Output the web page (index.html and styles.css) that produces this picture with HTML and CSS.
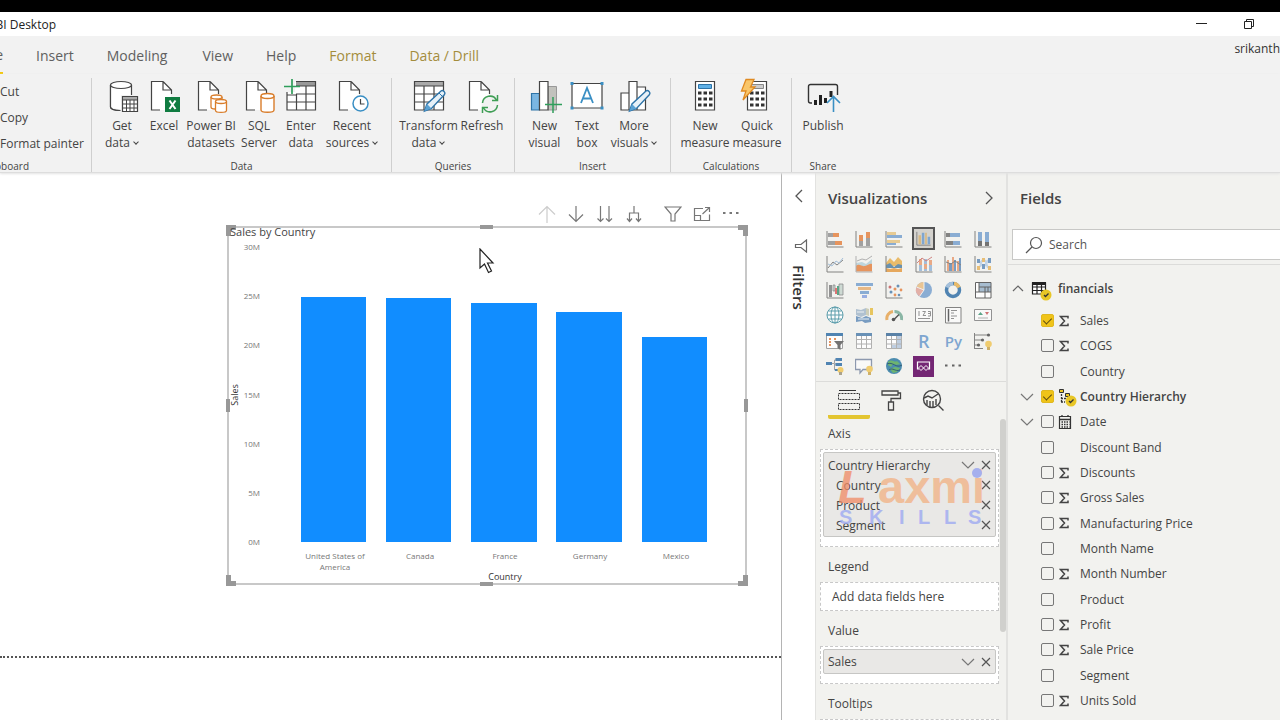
FILE: index.html
```html
<!DOCTYPE html>
<html lang="en">
<head>
<meta charset="utf-8">
<title>BI Desktop</title>
<link rel="stylesheet" href="styles.css">
</head>
<body>
<svg class="defs" aria-hidden="true">
  <defs>
    <symbol id="doc" viewBox="0 0 36 36"><path d="M5 3.500h12l8 8v20.500H5z" fill="#fff"/><path d="M17 3.500H5.500v28.500H14M17 3.500l8.500 8.500v4M17 3.500V12h8.500" fill="none" stroke="#444" stroke-width="1.200"/></symbol>
    <symbol id="x" viewBox="0 0 10 10"><path d="M1 1l8 8M9 1L1 9" stroke="#555" stroke-width="1.200"/></symbol>
    <symbol id="down" viewBox="0 0 14 8"><path d="M1 1l6 6 6-6" fill="none" stroke="#777" stroke-width="1.200"/></symbol>
    <symbol id="sigma" viewBox="0 0 10 12"><path d="M9 3.500V1.500H1.500L5.500 6l-4 4.500H9V8.500" fill="none" stroke="#444" stroke-width="1.500"/></symbol>
    <symbol id="axes" viewBox="0 0 18 18"><path d="M1 1v16h16.500" fill="none" stroke="#777"/></symbol>
  </defs>
</svg>

<div class="letterbox"></div>
<header class="titlebar">
  <span class="app-title">BI Desktop</span>
  <span class="window-buttons">
    <button aria-label="Minimize"><svg width="12" height="12" viewBox="0 0 12 12"><path d="M1 5.500h11" stroke="#222"/></svg></button>
    <button aria-label="Restore"><svg width="12" height="12" viewBox="0 0 12 12"><path d="M1.500 3.500h7v7h-7zM3.500 3.500v-2h7v7h-2" fill="none" stroke="#222"/></svg></button>
  </span>
</header>

<div class="tabbar">
  <nav class="tabs">
    <button class="tab active">e</button>
    <button class="tab">Insert</button>
    <button class="tab">Modeling</button>
    <button class="tab">View</button>
    <button class="tab">Help</button>
    <button class="tab context">Format</button>
    <button class="tab context">Data / Drill</button>
  </nav>
  <span class="user">srikanth</span>
</div>

<div class="ribbon">
  <section class="group clipboard">
    <div class="clip-list">
      <button>Cut</button>
      <button>Copy</button>
      <button>Format painter</button>
    </div>
    <span class="caption">pboard</span>
  </section>

  <section class="group data">
    <div class="tools">
      <button class="tool"><svg width="36" height="36" viewBox="0 0 36 36"><path d="M6.500 7v22c0 2 4 3.500 9 3.500" fill="none" stroke="#444" stroke-width="1.200"/><path d="M7 7h21v10H17v14c-6 0-10-1-10-3z" fill="#fff"/><path d="M6.500 7v22c0 2 4 3.500 10 3.500M27.500 7v10" fill="none" stroke="#444" stroke-width="1.200"/><ellipse cx="17" cy="7" rx="10.500" ry="3.500" fill="#fff" stroke="#444" stroke-width="1.200"/><path d="M18.500 18.500h15v15h-15z" fill="#fff" stroke="#444" stroke-width="1.200"/><path d="M19 19h14v3H19z" fill="#aaa"/><path d="M18.500 22h15M18.500 26h15M18.500 30h15M22.500 22v11.500M26 22v11.500M30 22v11.500" stroke="#444"/></svg><span>Get<br>data<i class="caret"></i></span></button>
      <button class="tool"><svg width="36" height="36" viewBox="0 0 36 36"><use href="#doc"/><rect x="19" y="19" width="15" height="15" fill="#107c41"/><path d="M23.500 22.500l6 8.500M29.500 22.500l-6 8.500" stroke="#fff" stroke-width="2"/></svg><span>Excel</span></button>
      <button class="tool"><svg width="36" height="36" viewBox="0 0 36 36"><use href="#doc"/><path d="M18 19v10c0 2 5 2 7 2V19z" fill="#fff"/><path d="M18 19v10c0 1.500 2 2 4 2M29 19v2" fill="none" stroke="#d97d2b" stroke-width="1.300"/><ellipse cx="23.500" cy="19" rx="5.500" ry="2" fill="#fff" stroke="#d97d2b" stroke-width="1.300"/><path d="M22.500 23.500v9c0 2.500 11 2.500 11 0v-9" fill="#fff" stroke="#d97d2b" stroke-width="1.300"/><ellipse cx="28" cy="23.500" rx="5.500" ry="2" fill="#fff" stroke="#d97d2b" stroke-width="1.300"/></svg><span>Power BI<br>datasets</span></button>
      <button class="tool"><svg width="36" height="36" viewBox="0 0 36 36"><use href="#doc"/><path d="M20 18v14c0 3 13 3 13 0V18" fill="#fff" stroke="#d97d2b" stroke-width="1.400"/><ellipse cx="26.500" cy="18" rx="6.500" ry="2.500" fill="#fff" stroke="#d97d2b" stroke-width="1.400"/></svg><span>SQL<br>Server</span></button>
      <button class="tool"><svg width="36" height="36" viewBox="0 0 36 36"><path d="M4 4h28v28H4z" fill="#fff"/><path d="M13 4h19v4H13z" fill="#999"/><path d="M13 3.500h19.500v28.500H4V14M13 8h19.500M13 16h19.500M4 24h28.500M13.500 16v16M23 8v24M4 17h10" fill="none" stroke="#444" stroke-width="1.200"/><path d="M0 0h12v14H0z" fill="#f2f2f2"/><path d="M9 1v15M1 8.500h16" stroke="#2f9e5b" stroke-width="1.700"/></svg><span>Enter<br>data</span></button>
      <button class="tool"><svg width="36" height="36" viewBox="0 0 36 36"><use href="#doc"/><circle cx="26.500" cy="25.500" r="7.500" fill="#fff" stroke="#3a8fc4" stroke-width="1.500"/><path d="M26.500 21v5h4" fill="none" stroke="#444" stroke-width="1.200"/></svg><span>Recent<br>sources<i class="caret"></i></span></button>
    </div>
    <span class="caption">Data</span>
  </section>

  <section class="group queries">
    <div class="tools">
      <button class="tool"><svg width="36" height="36" viewBox="0 0 36 36"><path d="M3.500 3.500h29v28.500h-29z" fill="#fff"/><path d="M4 4h28v4H4z" fill="#aaa"/><path d="M3.500 3.500h29v28.500h-29zM3.500 8h29M3.500 16h29M3.500 24h29M13 8v24M23 8v24" fill="none" stroke="#444" stroke-width="1.200"/><path d="M13.500 33l2.500-7 14-13c2-1.500 5 1.500 3.500 3.500l-13 14z" fill="#e7f1f8" stroke="#2e74a8" stroke-width="1.400"/><path d="M13.500 33l2.500-7 4.500 4.500z" fill="#5aa2d4"/><path d="M28 15l4 4" stroke="#2e74a8"/></svg><span>Transform<br>data<i class="caret"></i></span></button>
      <button class="tool"><svg width="36" height="36" viewBox="0 0 36 36"><use href="#doc"/><circle cx="26" cy="26" r="8.500" fill="#f2f2f2"/><path d="M18.500 25a7.500 7.500 0 0 1 14-3M33.500 27a7.500 7.500 0 0 1-14 3M33.500 17v5.500H28M18.500 35v-5.500H24" fill="none" stroke="#3f9e55" stroke-width="1.500"/></svg><span>Refresh</span></button>
    </div>
    <span class="caption">Queries</span>
  </section>

  <section class="group insert">
    <div class="tools">
      <button class="tool"><svg width="36" height="36" viewBox="0 0 36 36"><path d="M4.500 15.500h8V32h-8z" fill="#7ab6e2" stroke="#2e74a8" stroke-width="1.200"/><path d="M21 8.500h8.500V32H21z" fill="#c2c2bd" stroke="#999"/><path d="M12.500 3.500h8.500V32h-8.500z" fill="#fff" stroke="#444" stroke-width="1.200"/><path d="M26 19v16M18 26.500H35" stroke="#2f9e5b" stroke-width="1.500"/></svg><span>New<br>visual</span></button>
      <button class="tool"><svg width="36" height="36" viewBox="0 0 36 36"><path d="M3 5.500h30V30H3z" fill="#fff" stroke="#444" stroke-width="1.200"/><path d="M1.500 4h3v3h-3zM31.500 4h3v3h-3zM1.500 28.500h3v3h-3zM31.500 28.500h3v3h-3z" fill="#3a8fc4"/><path d="M12 25l6-15 6 15M14 20.500h8" fill="none" stroke="#3a8fc4" stroke-width="1.800"/></svg><span>Text<br>box</span></button>
      <button class="tool"><svg width="36" height="36" viewBox="0 0 36 36"><path d="M5 15h8v17H5zM21 9h8.500v23H21zM13 3.500h8V32h-8z" fill="#fff" stroke="#444" stroke-width="1.200"/><path d="M13.500 33l2.500-7 14-13c2-1.500 5 1.500 3.500 3.500l-13 14z" fill="#e7f1f8" stroke="#2e74a8" stroke-width="1.400"/><path d="M13.500 33l2.500-7 4.500 4.500z" fill="#5aa2d4"/></svg><span>More<br>visuals<i class="caret"></i></span></button>
    </div>
    <span class="caption">Insert</span>
  </section>

  <section class="group calc">
    <div class="tools">
      <button class="tool"><svg width="36" height="36" viewBox="0 0 36 36"><path d="M8.500 3.500h19V32h-19z" fill="#fff" stroke="#444" stroke-width="1.200"/><path d="M11.500 6.500h13v4h-13z" fill="#5fb0e6" stroke="#2e74a8"/><path d="M11 15h3.500M16.500 15H20M22 15h3.500M11 21h3.500M16.500 21H20M22 21h3.500M11 27h3.500M16.500 27H20M22 27h3.500" stroke="#333" stroke-width="3.200"/></svg><span>New<br>measure</span></button>
      <button class="tool"><svg width="36" height="36" viewBox="0 0 36 36"><path d="M8.500 3.500h19V32h-19z" fill="#fff" stroke="#444" stroke-width="1.200"/><path d="M12.500 6.500h12v4h-12z" fill="#ccc" stroke="#888"/><path d="M11 15h3.500M16.500 15H20M22 15h3.500M11 21h3.500M16.500 21H20M22 21h3.500M11 27h3.500M16.500 27H20M22 27h3.500" stroke="#333" stroke-width="3.200"/><path d="M7 1.500h8L11.500 9h4.500L4 22l3-9H2.500z" fill="#f9c66a" stroke="#e08a22" stroke-width="1.300"/></svg><span>Quick<br>measure</span></button>
    </div>
    <span class="caption">Calculations</span>
  </section>

  <section class="group share">
    <div class="tools">
      <button class="tool"><svg width="36" height="36" viewBox="0 0 36 36"><path d="M7 25H5.500a2 2 0 0 1-2-2V8.500a2 2 0 0 1 2-2h25a2 2 0 0 1 2 2V17" fill="none" stroke="#333" stroke-width="1.400"/><path d="M10.500 22v5M15.500 17v10M20.500 20v5M26 13v6" stroke="#222" stroke-width="3"/><path d="M28.500 34V19M22 25l6.500-6.500L35 25" fill="none" stroke="#3a8fc4" stroke-width="1.600"/></svg><span>Publish</span></button>
    </div>
    <span class="caption">Share</span>
  </section>
</div>

<main class="workspace">
  <section class="canvas">
    <div class="page">
      <div class="visual">
        <div class="visual-header">
          <button aria-label="Drill up"><svg width="18" height="18" viewBox="0 0 18 18"><path d="M9 18V1.500M1 9.500l8-8 8 8" fill="none" stroke="#ccc" stroke-width="1.200"/></svg></button>
          <button aria-label="Drill down"><svg width="18" height="18" viewBox="0 0 18 18"><path d="M9 1v15.500M2 9.500l7 7 7-7" fill="none" stroke="#777" stroke-width="1.200"/></svg></button>
          <button aria-label="Next level"><svg width="18" height="18" viewBox="0 0 18 18"><path d="M4.500 1v15.500M1.500 13.500l3 3 3-3M13 1v15.500M10 13.500l3 3 3-3" fill="none" stroke="#777" stroke-width="1.200"/></svg></button>
          <button aria-label="Expand all"><svg width="18" height="18" viewBox="0 0 18 18"><path d="M9 1v7M4.500 16.500V8h9v8.500M2 13.500l2.500 3 2.500-3M11 13.500l2.500 3 2.500-3" fill="none" stroke="#777" stroke-width="1.200"/></svg></button>
          <button class="spaced" aria-label="Filters on visual"><svg width="18" height="18" viewBox="0 0 18 18"><path d="M1 2h16l-6 7v7H7V9z" fill="none" stroke="#777" stroke-width="1.200"/></svg></button>
          <button aria-label="Focus mode"><svg width="18" height="18" viewBox="0 0 18 18"><path d="M10 3.500H1.500v12h15v-6M1.500 10.500h6v5M9.500 9l7-6.500M12 2.500h4.500V7" fill="none" stroke="#777" stroke-width="1.200"/></svg></button>
          <button aria-label="More options"><svg width="18" height="18" viewBox="0 0 18 18"><path d="M1 8h2.500M7.500 8H10M14 8h2.500" stroke="#777" stroke-width="2"/></svg></button>
        </div>
        <svg class="chart" viewBox="0 0 521 360" role="img" aria-label="Sales by Country">
          <rect x="1" y="1" width="518" height="357" fill="none" stroke="#a4a4a4" stroke-width="1.200"/>
          <g fill="#989898">
            <path d="M-1-1h10v5H4v6h-5zM521-1h-10v5h5v6h5zM-1 360h10v-5H4v-6h-5zM521 360h-10v-5h5v-6h5z"/>
            <path d="M253-1h13v4h-13zM253 356h13v4h-13zM-1 173h4v13h-4zM517 173h4v13h-4z"/>
          </g>
          <text class="chart-title" x="3" y="10">Sales by Country</text>
          <g class="tick" text-anchor="end">
            <text x="33" y="24">30M</text><text x="33" y="73">25M</text><text x="33" y="122">20M</text><text x="33" y="172">15M</text><text x="33" y="221">10M</text><text x="33" y="270">5M</text><text x="33" y="319">0M</text>
          </g>
          <g fill="#118dff">
            <rect x="74" y="71" width="65" height="245"/><rect x="159" y="72" width="65" height="244"/><rect x="244" y="77" width="66" height="239"/><rect x="329" y="86" width="66" height="230"/><rect x="415" y="111" width="65" height="205"/>
          </g>
          <g class="tick" text-anchor="middle">
            <text x="108" y="333">United States of</text><text x="108" y="344">America</text><text x="193" y="333">Canada</text><text x="278" y="333">France</text><text x="363" y="333">Germany</text><text x="449" y="333">Mexico</text>
          </g>
          <text class="axis-title" x="278" y="354" text-anchor="middle">Country</text>
          <text class="axis-title" x="11" y="169" text-anchor="middle" transform="rotate(-90 11 169)">Sales</text>
        </svg>
        <svg class="cursor" width="16" height="26" viewBox="0 0 16 26"><path d="M1 1v19l4.500-4 4 8.500 3-1.500-4-8H14z" fill="#fff" stroke="#222" stroke-width="1.200"/></svg>
      </div>
    </div>
  </section>

  <aside class="filters">
    <button aria-label="Expand filters"><svg width="9" height="14" viewBox="0 0 9 14"><path d="M8 1L2 7l6 6" fill="none" stroke="#555" stroke-width="1.300"/></svg></button>
    <svg class="funnel" width="14" height="14" viewBox="0 0 14 14"><path d="M12.500 1v12L7 8.500H1.500v-3H7z" fill="none" stroke="#666" stroke-width="1.200"/></svg>
    <span class="filters-label">Filters</span>
  </aside>

  <aside class="viz">
    <header class="pane-head"><h2>Visualizations</h2><button aria-label="Collapse"><svg width="9" height="14" viewBox="0 0 9 14"><path d="M1 1l6 6-6 6" fill="none" stroke="#555" stroke-width="1.300"/></svg></button></header>
    <div class="gallery">
      <button aria-label="Stacked bar"><svg viewBox="0 0 18 18"><use href="#axes"/><path d="M2 3h5v4H2zM2 11h7v4H2z" fill="#999"/><path d="M7 3h6v4H7zM9 11h7v4H9z" fill="#e58a4e"/></svg></button>
      <button aria-label="Stacked column"><svg viewBox="0 0 18 18"><use href="#axes"/><path d="M4 11h4v5H4zM11 8h4v8h-4z" fill="#999"/><path d="M4 5h4v6H4zM11 2h4v6h-4z" fill="#e58a4e"/></svg></button>
      <button aria-label="Clustered bar"><svg viewBox="0 0 18 18"><use href="#axes"/><path d="M2 2h9v3H2zM2 10h13v3H2z" fill="#e6c78a"/><path d="M2 5h15v3H2zM2 13h9v2H2z" fill="#7fa6d0"/></svg></button>
      <button class="selected" aria-label="Clustered column"><svg viewBox="0 0 18 18"><use href="#axes"/><path d="M3 5h3v11H3zM11 2h2v14h-2z" fill="#d9b982"/><path d="M7 2h3v14H7zM14 7h3v9h-3z" fill="#7fa6d0"/></svg></button>
      <button aria-label="100% stacked bar"><svg viewBox="0 0 18 18"><use href="#axes"/><path d="M2 3h4v4H2zM2 11h7v4H2z" fill="#777"/><path d="M6 3h10v4H6zM9 11h7v4H9z" fill="#7fa6d0"/></svg></button>
      <button aria-label="100% stacked column"><svg viewBox="0 0 18 18"><use href="#axes"/><path d="M4 11h4v5H4zM11 12h4v4h-4z" fill="#666"/><path d="M4 2h4v9H4zM11 2h4v10h-4z" fill="#7fa6d0"/></svg></button>

      <button aria-label="Line"><svg viewBox="0 0 18 18"><use href="#axes"/><path d="M2 13l5-6 4 3 6-5" fill="none" stroke="#777"/><path d="M2 9l4 2 4-5 3 2 4-5" fill="none" stroke="#9dbbd8"/></svg></button>
      <button aria-label="Area"><svg viewBox="0 0 18 18"><path d="M1 8l6-1 4 2 6-5v9H1z" fill="#b9d3dc"/><path d="M1 11c4-3 5 1 9 0s5-3 7-2v7.500H1z" fill="#e58a4e"/><path d="M1 1v16h16.500M2 6l5-2 4 1 6-4" fill="none" stroke="#aaa"/></svg></button>
      <button aria-label="Stacked area"><svg viewBox="0 0 18 18"><path d="M1 8l4-5 4 4 4-5 4 4v5H1z" fill="#e9b65c"/><path d="M1 10l4-2 4 4 4-3 4 1v3H1z" fill="#5b87a8"/><path d="M1 13l4 1 4-1 4 1 4-1v4H1z" fill="#e5a04e"/><path d="M1 1v16" stroke="#777"/></svg></button>
      <button aria-label="Line and stacked column"><svg viewBox="0 0 18 18"><use href="#axes"/><path d="M4 9h3v7H4zM9 4h3v12H9zM14 8h3v8h-3z" fill="#9bb9d8"/><path d="M4 4h3v6H4zM9 9h3v5H9zM14 5h3v5h-3z" fill="#e9a27a"/><path d="M2 8l5-5 4 3 6-4" fill="none" stroke="#c77"/></svg></button>
      <button aria-label="Line and clustered column"><svg viewBox="0 0 18 18"><use href="#axes"/><path d="M3 5h2v11H3zM8 2h2v14H8zM13 6h2v10h-2z" fill="#e9a27a"/><path d="M5 8h3v8H5zM10 5h2v11h-2zM15 3h2v13h-2z" fill="#6b93bd"/><path d="M2 7l5 2 4-3 6 4" fill="none" stroke="#777"/></svg></button>
      <button aria-label="Ribbon"><svg viewBox="0 0 18 18"><use href="#axes"/><path d="M6 6l2 5M11 11l3-6M6 12l2-7M11 5l3 8" stroke="#bcd0e4" stroke-width="2"/><path d="M3 4h3v4H3zM8 9h3v5H8zM14 3h3v5h-3z" fill="#6b93bd"/><path d="M3 11h3v4H3zM8 3h3v4H8zM14 11h3v4h-3z" fill="#e6b96a"/></svg></button>

      <button aria-label="Waterfall"><svg viewBox="0 0 18 18"><use href="#axes"/><path d="M3 4h3v12H3z" fill="#888"/><path d="M7 4h2v6H7zM13 3h4v11h-4z" fill="#cbd8d1" stroke="#777" stroke-width=".7"/><path d="M9 7h2v6H9z" fill="#d66"/><path d="M11 5h2v9h-2z" fill="#4c9c7c"/></svg></button>
      <button aria-label="Funnel"><svg viewBox="0 0 18 18"><path d="M1 2h17v3H1zM5 10h9v3H5z" fill="#7fa6d0"/><path d="M3 6h13v3H3z" fill="#e6b27a"/><path d="M7 14h5v3H7z" fill="#8fa7e0"/></svg></button>
      <button aria-label="Scatter"><svg viewBox="0 0 18 18"><use href="#axes"/><g fill="#5b87b0"><circle cx="6" cy="11" r="1.500"/><circle cx="13" cy="5" r="1.500"/><circle cx="14" cy="14" r="1.300"/></g><g fill="#e58a4e"><circle cx="10" cy="8" r="1.500"/><circle cx="10" cy="14" r="1.400"/><circle cx="16" cy="9" r="1.400"/></g><circle cx="5" cy="6" r="1.500" fill="#c66"/></svg></button>
      <button aria-label="Pie"><svg viewBox="0 0 18 18"><circle cx="9" cy="9" r="8" fill="#7fa6d0"/><path d="M9 9V1a8 8 0 0 0-7.500 5z" fill="#e9c18b"/><path d="M9 9L1.500 6a8 8 0 0 0 3 9.500z" fill="#e2a9a0"/><path d="M9 1v8l-4.500 6.500M9 9L1.500 6" fill="none" stroke="#f2f2ef"/></svg></button>
      <button aria-label="Donut"><svg viewBox="0 0 18 18"><circle cx="9" cy="9" r="6.500" fill="none" stroke="#3f79ac" stroke-width="3.500"/><path d="M3 6.500A6.500 6.500 0 0 1 9 2.500" fill="none" stroke="#9dbbd8" stroke-width="3.500"/><path d="M10 2.500a6.500 6.500 0 0 1 5 4" fill="none" stroke="#e9b65c" stroke-width="3.500"/></svg></button>
      <button aria-label="Treemap"><svg viewBox="0 0 18 18"><path d="M1.500 1.500h15.500v15.500H1.500z" fill="#fff"/><path d="M5 2h12v9H5z" fill="#9fb8cd"/><path d="M1.500 1.500h15.500v15.500H1.500zM1.500 11h15.500M5 1.500V11M11 6v11M5 6h12M14 6v5" fill="none" stroke="#555"/></svg></button>

      <button aria-label="Map"><svg viewBox="0 0 18 18"><g fill="none" stroke="#4c95a5"><circle cx="9" cy="9" r="8" fill="#fff"/><ellipse cx="9" cy="9" rx="4" ry="8"/><path d="M9 1v16M1 9h16M2.500 5h13M2.500 13h13"/></g></svg></button>
      <button aria-label="Filled map"><svg viewBox="0 0 18 18"><path d="M1 3l5 1 5-2v7l-5 2-5-2z" fill="#a9bccd"/><path d="M11 2l3 1v7l-3-1z" fill="#c9cbb3"/><path d="M1 10l6 2 4-2 5 2v4l-6 1-3-2-6 1z" fill="#6b93bd"/><path d="M15 2h3v7h-3z" fill="#e6c14f"/><path d="M2 6h7M3 13h11" stroke="#eef2f4"/></svg></button>
      <button aria-label="Gauge"><svg viewBox="0 0 18 18"><path d="M2 14a7 7 0 0 1 6-8.500" fill="none" stroke="#e8a95b" stroke-width="3"/><path d="M9.500 5.500A7 7 0 0 1 16.500 14" fill="none" stroke="#7fb09d" stroke-width="3"/><path d="M9 13.500l5-5" stroke="#444" stroke-width="1.500"/><circle cx="8.500" cy="13.500" r="1.800" fill="#444"/></svg></button>
      <button aria-label="Card"><svg viewBox="0 0 18 18"><path d="M.5 2.500h17v13H.5z" fill="#fafafa" stroke="#888"/><path d="M4 5v5M7.500 5.500h3L8 9.500h3M13 5.500h2.500V10H13M13 7.500h2M3 12.500h12" fill="none" stroke="#888"/></svg></button>
      <button aria-label="Multi-row card"><svg viewBox="0 0 18 18"><path d="M1.500 1.500h15.500v15.500H1.500z" fill="#fafafa" stroke="#777"/><path d="M4.500 3v12.500" stroke="#555" stroke-width="1.500"/><path d="M7 4.500h6M7 7h3M7 10h6M7 12.500h3" stroke="#888"/></svg></button>
      <button aria-label="KPI"><svg viewBox="0 0 18 18"><path d="M.5 3.500h17v11H.5z" fill="#fafafa" stroke="#888"/><path d="M4 9l2.500-3L9 9z" fill="#4c9c7c"/><path d="M11 6h4l-2 3z" fill="#c66"/><path d="M4 12h10" stroke="#aaa"/></svg></button>

      <button aria-label="Slicer"><svg viewBox="0 0 18 18"><path d="M.5 1.500h16v15h-16z" fill="#fff" stroke="#999"/><path d="M0 1h17v3H0z" fill="#3f79ac"/><path d="M3 7h2M3 10h2M3 13h2M8 7h2" stroke="#e58a4e" stroke-width="2"/><path d="M8 9h10l-3.500 4v5l-3-2v-3z" fill="#666"/></svg></button>
      <button aria-label="Table"><svg viewBox="0 0 18 18"><path d="M1.500 2.500h15v14h-15zM1.500 7.500h15M1.500 12h15M6.500 2v15M11.500 2v15" fill="#fff" stroke="#aaa"/><path d="M1 1h16v3H1z" fill="#5b87b0"/></svg></button>
      <button aria-label="Matrix"><svg viewBox="0 0 18 18"><path d="M1.500 2.500h15v14h-15z" fill="#fff"/><path d="M12 4h5v13H7v-4h5z" fill="#b9cbe0"/><path d="M1.500 2.500h15v14h-15zM1.500 7.500h15M1.500 12h15M6.500 2v15M11.500 2v15" fill="none" stroke="#aaa"/><path d="M1 1h16v3H1z" fill="#4a76a0"/></svg></button>
      <button class="script" aria-label="R script visual">R</button>
      <button class="script py" aria-label="Python visual">Py</button>
      <button aria-label="Key influencers"><svg viewBox="0 0 18 18"><path d="M.5 1v16M1 3h13M1 8h7M1 13h4M0 16.500h9" stroke="#777"/><g fill="#555"><circle cx="14.500" cy="3" r="1.600"/><circle cx="8.500" cy="8" r="1.600"/><circle cx="4.500" cy="13" r="1.600"/></g><circle cx="14.500" cy="12" r="3.300" fill="#f0c862"/><path d="M13 15h3v3h-3z" fill="#cba95a"/></svg></button>

      <button aria-label="Decomposition tree"><svg viewBox="0 0 18 18"><path d="M6 6.500h2.500V3H10M8.500 7H10M8.500 7v6H11" fill="none" stroke="#999"/><path d="M0 5h6v3H0zM9.500 1H16v3H9.500zM9.500 6H16v3H9.500zM9 12h3v2H9z" fill="#3f79ac"/><circle cx="14.500" cy="13" r="3" fill="#f0c862"/><path d="M13 15h3v3h-3z" fill="#a39a82"/></svg></button>
      <button aria-label="Q and A"><svg viewBox="0 0 18 18"><path d="M.5 2.500h16v10H8l-3 3.500v-3.500H.5z" fill="#fafafa" stroke="#8390a8" stroke-width="1.300"/><circle cx="14.500" cy="12" r="3.300" fill="#f0c862"/><path d="M13 15h3v3h-3z" fill="#cba95a"/></svg></button>
      <button aria-label="ArcGIS map"><svg viewBox="0 0 18 18"><circle cx="9" cy="9" r="8" fill="#3b82a8"/><path d="M3 5c4-4 6 1 9-1l3 3-4 1-3-1-2 3-3-2zM5 12l5-2 5 1-3 4-4 1z" fill="#5fae62"/><path d="M2 7c6-3 9 5 15 1M4 13c4-3 6 2 11 0" fill="none" stroke="#1c4d6b"/></svg></button>
      <button aria-label="Power Apps"><svg class="tile" viewBox="0 0 21 21"><path d="M0 0h21v21H0z" fill="#742774"/><path d="M6 13H4.500V6h12v7H15" fill="none" stroke="#fff" stroke-width="1.200"/><path d="M8 9.500l2.500 2.500L8 14.500 5.500 12zM13 9.500l2.500 2.500-2.500 2.500-2.500-2.500z" fill="#742774" stroke="#fff"/></svg></button>
      <button aria-label="More visuals"><svg viewBox="0 0 18 18"><path d="M1 8.500h2.500M8 8.500h2.500M14.500 8.500H17" stroke="#555" stroke-width="2"/></svg></button>
    </div>

    <div class="viz-tabs">
      <button class="active" aria-label="Fields"><svg width="24" height="24" viewBox="0 0 24 24"><path d="M2 1.500h17" stroke="#333"/><path d="M1.500 4.500h21v6h-21zM1.500 14.500h21v6h-21z" fill="none" stroke="#333" stroke-dasharray="2 1"/></svg></button>
      <button aria-label="Format"><svg width="24" height="24" viewBox="0 0 24 24"><path d="M3 2h16v4H3zM19 4h2.500v5.500H12V13M9.500 13h5v8h-5z" fill="none" stroke="#444" stroke-width="1.300"/></svg></button>
      <button aria-label="Analytics"><svg width="24" height="24" viewBox="0 0 24 24"><circle cx="11" cy="10" r="8.500" fill="none" stroke="#444" stroke-width="1.400"/><path d="M17.500 16.500l5 5M3 9l4-2 4 2 6-4M6 11v5M9 12v6M12 12v6M15 10v6" fill="none" stroke="#444" stroke-width="1.400"/></svg></button>
    </div>

    <div class="wells">
      <div class="scrollthumb"></div>
      <section class="well"><h3>Axis</h3>
        <div class="drop">
          <div class="pill">
            <div class="item">Country Hierarchy<svg class="expand" width="14" height="8"><use href="#down"/></svg><button aria-label="Remove Country Hierarchy"><svg width="10" height="10"><use href="#x"/></svg></button></div>
            <div class="item child">Country<button aria-label="Remove Country"><svg width="10" height="10"><use href="#x"/></svg></button></div>
            <div class="item child">Product<button aria-label="Remove Product"><svg width="10" height="10"><use href="#x"/></svg></button></div>
            <div class="item child">Segment<button aria-label="Remove Segment"><svg width="10" height="10"><use href="#x"/></svg></button></div>
          </div>
          <svg class="watermark" width="150" height="62" viewBox="0 0 150 62">
            <text class="brand" y="36"><tspan class="brand-l" x="0">L</tspan><tspan x="40">axmi</tspan></text>
            <circle cx="139" cy="6" r="5" fill="#8f9cf0"/>
            <text class="brand-sub" x="1 31 61 80 106 130" y="57">SKILLS</text>
          </svg>
        </div>
      </section>
      <section class="well"><h3>Legend</h3><div class="drop empty">Add data fields here</div></section>
      <section class="well"><h3>Value</h3>
        <div class="drop"><div class="pill single"><div class="item">Sales<svg class="expand" width="14" height="8"><use href="#down"/></svg><button aria-label="Remove Sales"><svg width="10" height="10"><use href="#x"/></svg></button></div></div></div>
      </section>
      <section class="well"><h3>Tooltips</h3><div class="drop empty"></div></section>
    </div>
  </aside>

  <aside class="fields">
    <header class="pane-head"><h2>Fields</h2></header>
    <label class="search"><svg width="18" height="18" viewBox="0 0 18 18"><circle cx="11" cy="7" r="5.500" fill="none" stroke="#555" stroke-width="1.200"/><path d="M7 11l-6 6" stroke="#555" stroke-width="1.200"/></svg><input type="text" placeholder="Search" aria-label="Search"></label>
    <div class="table-row">
      <svg width="12" height="8" viewBox="0 0 12 8"><path d="M1 7l5-5 5 5" fill="none" stroke="#666" stroke-width="1.200"/></svg>
      <svg class="tbl" width="22" height="22" viewBox="0 0 22 22"><path d="M1.500 4h13v11h-13zM1.500 8h13M1.500 11.500h13M6 5v10M10.500 5v10" fill="#fff" stroke="#222" stroke-width="1.200"/><path d="M1 3h14v3H1z" fill="#222"/><circle cx="15" cy="16" r="5.500" fill="#e8c626"/><path d="M13 16l1.500 1.500 3-3" fill="none" stroke="#333" stroke-width="1.300"/></svg>
      <span>financials</span>
    </div>
    <ul class="field-list">
      <li><i></i><input type="checkbox" id="f1" checked><svg class="ic"><use href="#sigma"/></svg><label for="f1">Sales</label></li>
      <li><i></i><input type="checkbox" id="f2"><svg class="ic"><use href="#sigma"/></svg><label for="f2">COGS</label></li>
      <li><i></i><input type="checkbox" id="f3"><i class="ic"></i><label for="f3">Country</label></li>
      <li><svg width="14" height="8"><use href="#down"/></svg><input type="checkbox" id="f4" checked><svg class="wide" width="20" height="20" viewBox="0 0 20 20"><path d="M2.500 2.500h4v3h-4zM8.500 6.500h4v3h-4z" fill="#e8c626" stroke="#333"/><path d="M4.500 7v8M4 11.500h5M4 15h4" stroke="#333" stroke-dasharray="2 1" stroke-width="1.300"/><circle cx="14" cy="14" r="5.500" fill="#e8c626"/><path d="M12 14l1.500 1.500 3-3" fill="none" stroke="#333" stroke-width="1.300"/></svg><label for="f4" class="strong">Country Hierarchy</label></li>
      <li><svg width="14" height="8"><use href="#down"/></svg><input type="checkbox" id="f5"><svg class="wide" width="20" height="20" viewBox="0 0 20 20"><path d="M2.500 4.500h11v12h-11z" fill="none" stroke="#333" stroke-width="1.200"/><path d="M2 7.500h12M5 3v2M11 3v2" stroke="#333" stroke-width="1.300"/><path d="M4.500 10h8M4.500 12.500h8M4.500 15h8" stroke="#333" stroke-width="1.300" stroke-dasharray="1.500 1"/></svg><label for="f5">Date</label></li>
      <li><i></i><input type="checkbox" id="f6"><i class="ic"></i><label for="f6">Discount Band</label></li>
      <li><i></i><input type="checkbox" id="f7"><svg class="ic"><use href="#sigma"/></svg><label for="f7">Discounts</label></li>
      <li><i></i><input type="checkbox" id="f8"><svg class="ic"><use href="#sigma"/></svg><label for="f8">Gross Sales</label></li>
      <li><i></i><input type="checkbox" id="f9"><svg class="ic"><use href="#sigma"/></svg><label for="f9">Manufacturing Price</label></li>
      <li><i></i><input type="checkbox" id="f10"><i class="ic"></i><label for="f10">Month Name</label></li>
      <li><i></i><input type="checkbox" id="f11"><svg class="ic"><use href="#sigma"/></svg><label for="f11">Month Number</label></li>
      <li><i></i><input type="checkbox" id="f12"><i class="ic"></i><label for="f12">Product</label></li>
      <li><i></i><input type="checkbox" id="f13"><svg class="ic"><use href="#sigma"/></svg><label for="f13">Profit</label></li>
      <li><i></i><input type="checkbox" id="f14"><svg class="ic"><use href="#sigma"/></svg><label for="f14">Sale Price</label></li>
      <li><i></i><input type="checkbox" id="f15"><i class="ic"></i><label for="f15">Segment</label></li>
      <li><i></i><input type="checkbox" id="f16"><svg class="ic"><use href="#sigma"/></svg><label for="f16">Units Sold</label></li>
    </ul>
  </aside>
</main>
</body>
</html>
```

FILE: styles.css
```css
* { box-sizing: border-box; }

body {
  margin: 0;
  height: 100vh;
  display: flex;
  flex-direction: column;
  overflow: hidden;
  background: #fff;
  color: #444;
  font: 12px/17px "Open Sans", "Noto Sans", sans-serif;
}

button {
  border: 0;
  padding: 0;
  background: none;
  color: inherit;
  font: inherit;
}

svg { display: block; flex: none; }
.defs { position: absolute; width: 0; height: 0; }

h2, h3, ul { margin: 0; padding: 0; font-weight: normal; }

.letterbox { flex: none; height: 12px; background: #000; }

.titlebar {
  flex: none;
  display: flex;
  justify-content: space-between;
  align-items: center;
  height: 24px;
  padding-right: 25px;
  color: #222;
}
.app-title { width: 56px; display: flex; justify-content: flex-end; white-space: nowrap; }
.window-buttons { display: flex; gap: 36px; }

.tabbar {
  flex: none;
  display: flex;
  justify-content: space-between;
  height: 38px;
  background: #f2f2f2;
}
.tabs { display: flex; gap: 33px; font-size: 14px; }
.tab { height: 38px; color: #606060; white-space: nowrap; }
.tab:nth-child(4) { margin-left: 2px; }
.tab.active { width: 3px; display: flex; align-items: center; justify-content: flex-end; border-bottom: 2px solid #f2c811; }
.tab.context { color: #a48d3c; }
.user { padding-top: 4px; color: #333; }

.ribbon {
  flex: none;
  display: flex;
  padding-top: 4px;
  background: #f2f2f2;
  border-bottom: 1px solid #ddd;
  box-shadow: 0 1px 2px #e4e4e4;
  z-index: 1;
}
.group {
  display: flex;
  flex-direction: column;
  justify-content: space-between;
  height: 94px;
  border-right: 1px solid #cfcfcf;
}
.group.share { border-right: 0; }
.caption { text-align: center; font-size: 10px; line-height: 12px; }
.clipboard { width: 92px; }
.clipboard .caption { display: flex; justify-content: flex-end; width: 29px; }
.clip-list { display: grid; grid-auto-rows: 26px; }
.clip-list button { text-align: left; white-space: nowrap; }

.tools { display: grid; }
.data .tools { grid-template-columns: 42px 42px 52px 44px 40px 62px; padding: 0 8px 0 9px; }
.queries .tools { grid-template-columns: 55px 52px; padding: 0 6px 0 9px; }
.insert .tools { grid-template-columns: 41px 44px 50px; padding: 0 11px 0 9px; }
.calc .tools { grid-template-columns: 48px 56px; padding: 0 6px 0 10px; }
.share .tools { grid-template-columns: 62px; }
.tool {
  display: flex;
  flex-direction: column;
  align-items: center;
  line-height: 17px;
  white-space: nowrap;
}
.tool span { display: block; padding-top: 3px; }
.caret {
  display: inline-block;
  width: 4px;
  height: 4px;
  margin: 0 1px 3px 4px;
  border: solid #444;
  border-width: 0 1px 1px 0;
  transform: rotate(45deg);
}

.workspace { flex: 1; display: flex; min-height: 0; }

.canvas { flex: 1; min-width: 0; }
.page { position: relative; height: 485px; border-bottom: 2px dotted #555; }
.visual { position: absolute; left: 227px; top: 53px; width: 521px; height: 360px; }
.chart { width: 100%; height: 100%; overflow: visible; font-family: "Open Sans", sans-serif; }
.chart-title { font-size: 11px; fill: #444; }
.tick { font-size: 8px; fill: #777; }
.axis-title { font-size: 9px; fill: #333; }
.visual-header { position: absolute; right: 3px; bottom: 359px; display: flex; }
.visual-header button { width: 29px; height: 26px; display: flex; align-items: center; justify-content: center; }
.visual-header .spaced { margin-left: 10px; }
.cursor { position: absolute; left: 252px; top: 22px; }

.filters {
  flex: none;
  display: flex;
  flex-direction: column;
  align-items: center;
  width: 34px;
  padding-top: 16px;
  border-left: 1px solid #b4b4b4;
}
.funnel { margin: 36px 0 12px 4px; }
.filters-label { writing-mode: vertical-rl; font-size: 15px; font-weight: 600; line-height: 18px; color: #333; }

.viz, .fields { flex: none; background: #f2f2ef; }
.viz { display: flex; flex-direction: column; width: 191px; border-left: 1px solid #e2e2e0; }
.fields { display: flex; flex-direction: column; width: 274px; border-left: 2px solid #e2e2e0; }

.pane-head {
  flex: none;
  display: flex;
  align-items: center;
  justify-content: space-between;
  height: 50px;
  padding: 0 12px;
}
.pane-head h2 { font-size: 15px; line-height: 20px; font-weight: 600; color: #444; }

.gallery {
  display: grid;
  grid-template-columns: repeat(6, 1fr);
  grid-auto-rows: 25px 26px;
  padding: 3px 8px 0 4px;
}
.gallery button { display: flex; align-items: center; justify-content: center; }
.gallery svg { width: 18px; height: 18px; opacity: 0.9; }
.gallery .tile { width: 21px; height: 21px; opacity: 1; }
.gallery .selected svg { width: 23px; height: 23px; padding: 2px; background: #d4d2cd; border: 2px solid #555; opacity: 1; }
.gallery .script { font-size: 18px; font-weight: 600; color: #7fa6d0; line-height: 20px; }
.gallery .script.py { font-size: 15px; }

.viz-tabs {
  flex: none;
  display: flex;
  height: 38px;
  margin-top: 2px;
  padding-left: 12px;
  border-top: 1px solid #dcdcda;
}
.viz-tabs button { display: flex; justify-content: center; width: 42px; padding-top: 7px; }
.viz-tabs .active { border-bottom: 4px solid #e3c530; border-radius: 2px; }

.wells { position: relative; flex: 1; min-height: 0; overflow: hidden; padding: 0 7px 0 4px; }
.scrollthumb { position: absolute; right: 0; top: 0; width: 6px; height: 213px; border-radius: 3px; background: #d0d0cd; }
.well h3 { padding: 5px 8px 0; font-size: 12px; line-height: 30px; }
.well:nth-child(2) h3 { padding-top: 0; }
.drop { position: relative; padding: 2px 2px 9px; background: #fff; border: 1px dashed #c8c8c8; }
.drop.empty { min-height: 29px; padding: 0 11px; line-height: 27px; }
.pill { padding: 2px 4px 1px; background: #e9e8e6; border: 1px solid #c6c6c4; border-radius: 2px; }
.pill.single { padding-top: 0; padding-bottom: 0; }
.item { display: flex; align-items: center; height: 20px; white-space: nowrap; }
.pill.single .item { height: 23px; }
.item.child { padding-left: 8px; }
.item button { margin-left: auto; }
.item .expand { margin-left: auto; }
.item .expand + button { margin-left: 6px; }
.watermark { position: absolute; left: 17px; top: 17px; opacity: 0.75; pointer-events: none; }
.brand { font: bold 47px "Liberation Sans", sans-serif; fill: #f2b183; }
.brand-l { font-style: italic; fill: #f08a64; }
.brand-sub { font: bold 20px "Liberation Sans", sans-serif; fill: #9aa6f2; }

.search {
  flex: none;
  display: flex;
  align-items: center;
  gap: 6px;
  height: 31px;
  margin: 6px 0 4px 4px;
  padding-left: 12px;
  background: #fff;
  border: 1px solid #c8c8c6;
  border-right: 0;
}
.search input { flex: 1; min-width: 0; border: 0; padding: 0; outline: 0; background: none; font: inherit; }
.search input::placeholder { color: #555; opacity: 1; }

.table-row {
  flex: none;
  display: flex;
  align-items: center;
  height: 44px;
  padding: 3px 0 0 4px;
  border-top: 1px solid #dcdcda;
  font-weight: 600;
}
.tbl { margin: 3px 5px 0 7px; }

.field-list { display: grid; grid-auto-rows: 25px 25px 26px; list-style: none; }
.field-list li { display: grid; grid-template-columns: 21px 13px 16px 1fr; align-items: center; padding-left: 12px; }
.field-list input {
  appearance: none;
  display: flex;
  justify-content: center;
  width: 13px;
  height: 13px;
  margin: 0;
  border: 1px solid #777;
  border-radius: 2px;
}
.field-list input:checked { background: #f0c419; border-color: #e0b820; }
.field-list input:checked::after {
  content: "";
  width: 4px;
  height: 7px;
  margin-top: 1px;
  border: solid #5a4a10;
  border-width: 0 1px 1px 0;
  transform: rotate(45deg);
}
.ic { width: 10px; height: 12px; margin-left: 5px; }
.wide { margin-left: 3px; }
.field-list label { padding-left: 10px; white-space: nowrap; }
.strong { font-weight: 600; }
```
